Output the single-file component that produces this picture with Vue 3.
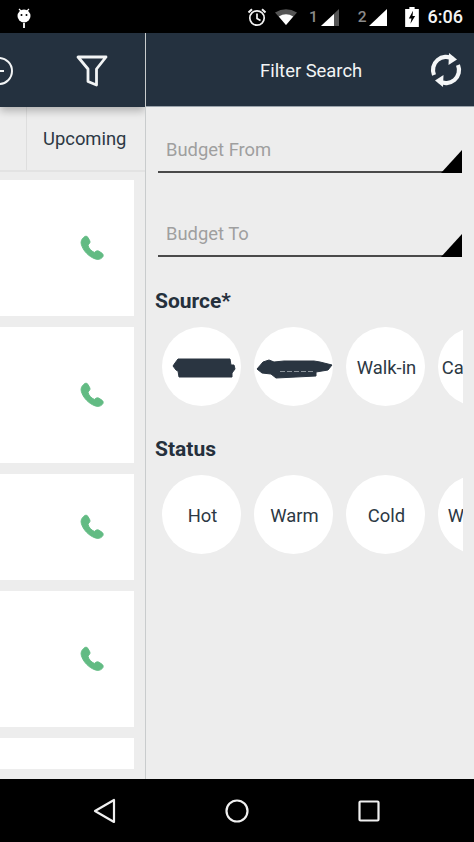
<script setup>
const cards = [
  { height: 136, phone: true },
  { height: 136, phone: true },
  { height: 106, phone: true },
  { height: 136, phone: true },
  { height: 31, phone: false },
]

const sourceChips = [
  { id: 'hidden-a', blot: 'M16 9 L13 13 L11 16 L14 20 L16 21 L17 27 L70 27 L70 23 L73 19 L72 15 L69 15 L68 9 Z', label: '' },
  { id: 'hidden-b', blot: 'M3 19 L9 12 L15 10 L20 12 L30 11 L60 11 L66 12 L78 15 L74 20 L62 22 L62 26 L22 28 L17 24 L8 23 Z', label: '' },
  { id: 'walk', label: 'Walk-in' },
  { id: 'cable', label: 'Cable TV' },
]

const statusChips = ['Hot', 'Warm', 'Cold', 'Waiting']
</script>

<template>
  <div class="screen">
    <header class="status-bar">
      <svg class="android" width="20" height="22" viewBox="0 0 20 22">
        <path d="M5 3 L7 5 M15 3 L13 5" stroke="#fff" stroke-width="1.2" />
        <circle cx="10" cy="10" r="6.5" fill="#fff" />
        <circle cx="7.5" cy="9" r="1" fill="#000" />
        <circle cx="12.5" cy="9" r="1" fill="#000" />
        <rect x="9" y="17" width="2" height="5" fill="#e6e6e6" />
      </svg>
      <div class="status-icons">
        <svg width="22" height="22" viewBox="0 0 22 22" fill="none" stroke="#f2f2f2" stroke-width="1.7">
          <circle cx="11" cy="12" r="7.2" />
          <path d="M11 7.5 V12.5 L14.5 14.5" />
          <path d="M2.5 6.5 L6 3.2 M19.5 6.5 L16 3.2" stroke-width="2" />
        </svg>
        <svg class="wifi" width="24" height="18" viewBox="0 0 24 18">
          <path d="M1 4.5 Q12 -2 23 4.5 L12 17 Z" fill="#555" />
          <path d="M4.8 8.5 Q12 3.8 19.2 8.5 L12 17 Z" fill="#fff" />
        </svg>
        <span class="sim sim-one">1</span>
        <svg width="19" height="18" viewBox="0 0 19 18">
          <path d="M0 18 L18 1 V18 Z" fill="#555" />
          <path d="M0 18 L13 6 V18 Z" fill="#fff" />
        </svg>
        <span class="sim sim-two">2</span>
        <svg width="19" height="18" viewBox="0 0 19 18">
          <path d="M0 18 L18 1 V18 Z" fill="#fff" />
        </svg>
        <svg class="battery" width="14" height="20" viewBox="0 0 13 19">
          <path d="M4 0 H9 V2 H13 V19 H0 V2 H4 Z" fill="#fff" />
          <path d="M7.5 3.5 L3.5 11 H6 L5 16 L9.5 8.5 H7 Z" fill="#000" />
        </svg>
        <span class="clock">6:06</span>
      </div>
    </header>

    <main class="content">
      <section class="list-pane">
        <div class="list-header">
          <svg class="minus-icon" width="28" height="30" viewBox="0 0 28 30" fill="none" stroke="#f2f4f5" stroke-width="2">
            <circle cx="14" cy="15" r="13" />
            <path d="M8 15 H19" />
          </svg>
          <svg class="funnel-icon" width="32" height="32" viewBox="0 0 32 32" fill="none" stroke="#f2f4f5" stroke-width="2.8" stroke-linejoin="round">
            <path d="M2 2 H30 L20.5 14 V30 L12 26.5 V14 Z" />
          </svg>
        </div>
        <div class="tabs">
          <div class="tab-stub"></div>
          <div class="tab">Upcoming</div>
        </div>
        <div class="cards">
          <div v-for="(card, i) in cards" :key="i" class="card" :style="{ height: card.height + 'px' }">
            <svg v-if="card.phone" class="phone" width="24" height="26" viewBox="0 0 26 28">
              <path
                d="M4 2.5 C5.5 0.8 7.5 0.8 8.5 2.4 L10.5 6 C11.2 7.4 10.8 8.6 9.8 9.6 L8.6 10.8 C9.6 14.6 12 17.2 15.6 18.8 L17.2 17.6 C18.2 16.8 19.6 16.8 20.8 17.6 L24 19.8 C25.6 21 25.4 23.2 24 24.4 C22 26.4 19.2 26.8 16.4 25.8 C9.2 23.2 3.4 17 1.4 10 C0.6 7 1.8 4.4 4 2.5 Z"
                fill="#62bb83"
                stroke="#62bb83"
                stroke-width="1"
              />
            </svg>
          </div>
        </div>
      </section>

      <aside class="filter-pane">
        <div class="filter-header">
          <h1 class="filter-title">Filter Search</h1>
          <svg class="refresh-icon" width="32" height="36" viewBox="0 0 32 36" fill="none">
            <path d="M4 23 A13 13 0 0 1 23 7" stroke="#f4f6f7" stroke-width="4.2" />
            <path d="M19 1 L27 7.5 L18.5 13 Z" fill="#f4f6f7" />
            <path d="M28 13 A13 13 0 0 1 9 29" stroke="#f4f6f7" stroke-width="4.2" />
            <path d="M13 35 L5 28.5 L13.5 23 Z" fill="#f4f6f7" />
          </svg>
        </div>

        <div class="filter-body">
          <div class="select-field field-from">
            <span class="placeholder">Budget From</span>
            <span class="select-corner"></span>
          </div>
          <div class="select-field field-to">
            <span class="placeholder">Budget To</span>
            <span class="select-corner"></span>
          </div>

          <h2 class="group-title source-title">Source*</h2>
          <div class="chips">
            <div v-for="chip in sourceChips" :key="chip.id" class="chip">
              <svg v-if="chip.blot" class="blot" width="79" height="34" viewBox="0 0 79 34">
                <path :d="chip.blot" fill="#2a3541" stroke="#2a3541" stroke-width="1" />
                <path v-if="chip.id === 'hidden-b'" d="M26 21.5 H60" stroke="#8b939a" stroke-width="1" stroke-dasharray="5 2" />
              </svg>
              <span v-else class="chip-label">{{ chip.label }}</span>
            </div>
          </div>

          <h2 class="group-title status-title">Status</h2>
          <div class="chips">
            <div v-for="chip in statusChips" :key="chip" class="chip">
              <span class="chip-label">{{ chip }}</span>
            </div>
          </div>
        </div>
      </aside>
    </main>

    <nav class="nav-bar">
      <svg width="26" height="28" viewBox="0 0 26 28" fill="none" stroke="#f0f0f0" stroke-width="2.2" stroke-linejoin="round">
        <path d="M22 3 V25 L3 14 Z" />
      </svg>
      <svg width="26" height="26" viewBox="0 0 26 26" fill="none" stroke="#f0f0f0" stroke-width="2.2">
        <circle cx="13" cy="13" r="10.5" />
      </svg>
      <svg width="26" height="26" viewBox="0 0 26 26" fill="none" stroke="#f0f0f0" stroke-width="2.2" stroke-linejoin="round">
        <rect x="3.5" y="3.5" width="19" height="19" rx="1" />
      </svg>
    </nav>
  </div>
</template>

<style scoped>
.screen {
  width: 474px;
  height: 842px;
  display: flex;
  flex-direction: column;
  overflow: hidden;
  background: #ededed;
  font-family: Roboto, "Liberation Sans", sans-serif;
  color: #2a3541;
}

.status-bar {
  height: 33px;
  flex: none;
  display: flex;
  align-items: center;
  justify-content: space-between;
  padding: 0 11px 0 14px;
  background: #000;
}

.android {
  margin-top: 1px;
}

.status-icons {
  display: flex;
  align-items: center;
}

.wifi {
  margin-left: 6px;
}

.sim {
  font-size: 15.5px;
  font-weight: 500;
  color: #8a8a8a;
}

.sim-one {
  margin-left: 11px;
  margin-right: 3px;
}

.sim-two {
  margin-left: 18px;
  margin-right: 2px;
}

.battery {
  margin-left: 17px;
}

.clock {
  margin-left: 9px;
  font-size: 18px;
  font-weight: 500;
  color: #f4f4f4;
}

.content {
  flex: 1;
  min-height: 0;
  display: flex;
}

.list-pane {
  width: 145px;
  flex: none;
  overflow: hidden;
  border-right: 1px solid #c9cccd;
}

.list-header {
  height: 74px;
  display: flex;
  align-items: center;
  background: #24313f;
  box-shadow: 0 4px 8px rgba(0, 0, 0, 0.25);
  position: relative;
}

.minus-icon {
  flex: none;
  margin-left: -15px;
  margin-top: 1px;
}

.funnel-icon {
  margin-left: 63px;
  margin-top: 1px;
}

.tabs {
  height: 63px;
  display: flex;
  border-bottom: 2px solid #e3e3e3;
}

.tab-stub {
  width: 26px;
  border-right: 1px solid #dedede;
}

.tab {
  flex: 1;
  padding: 21px 0 0 16px;
  font-size: 18.4px;
  line-height: 21px;
  white-space: nowrap;
  color: #2c3844;
}

.cards {
  padding-top: 8px;
  display: flex;
  flex-direction: column;
  gap: 11px;
}

.card {
  width: 134px;
  flex: none;
  display: flex;
  align-items: center;
  justify-content: flex-end;
  padding-right: 30px;
  box-sizing: border-box;
  background: #fff;
}

.filter-pane {
  flex: 1;
  min-width: 0;
}

.filter-header {
  height: 74px;
  display: flex;
  align-items: center;
  justify-content: space-between;
  padding: 1px 12px 0 114px;
  box-sizing: border-box;
  background: #24313f;
  border-bottom: 1px solid #9aa3ab;
}

.filter-title {
  margin: 0;
  font-size: 18.4px;
  font-weight: 400;
  color: #f2f4f5;
}

.filter-body {
  padding: 0 11px 0 9px;
}

.select-field {
  position: relative;
  height: 36px;
  margin: 0 1px 0 3px;
  border-bottom: 2px solid #4a4a4a;
}

.field-from {
  margin-top: 28px;
}

.field-to {
  margin-top: 46px;
}

.placeholder {
  display: block;
  padding: 4px 0 0 8px;
  font-size: 18.4px;
  line-height: 21px;
  color: #9f9f9f;
}

.select-corner {
  position: absolute;
  right: 0;
  bottom: -2px;
  width: 0;
  height: 0;
  border-style: solid;
  border-width: 0 0 23px 21px;
  border-color: transparent transparent #000 transparent;
}

.group-title {
  margin: 0;
  font-size: 21px;
  font-weight: 700;
  line-height: 24px;
  color: #25303c;
}

.source-title {
  margin-top: 32px;
}

.status-title {
  margin-top: 31px;
}

.chips {
  display: flex;
  gap: 13px;
  margin-top: 14px;
  padding-left: 7px;
  overflow: hidden;
}

.chip {
  width: 79px;
  height: 79px;
  flex: none;
  display: flex;
  align-items: center;
  justify-content: center;
  border-radius: 50%;
  background: #fff;
  overflow: hidden;
  font-size: 18.4px;
  color: #2c3844;
}

.chip-label {
  padding: 2px 0 0 2px;
  white-space: nowrap;
}

.nav-bar {
  height: 63px;
  flex: none;
  display: flex;
  align-items: center;
  justify-content: center;
  gap: 106px;
  background: #000;
}
</style>

<style>
html,
body {
  margin: 0;
  background: #000;
}
</style>
